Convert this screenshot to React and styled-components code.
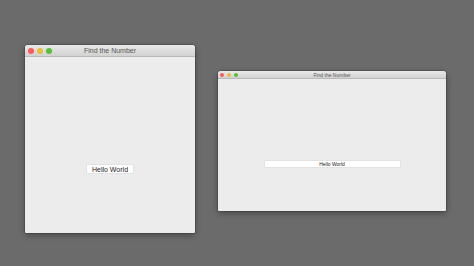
import React from 'react'
import styled, { createGlobalStyle } from 'styled-components'

const Global = createGlobalStyle`
  html, body { margin: 0; padding: 0; }
  body {
    width: 474px;
    height: 266px;
    overflow: hidden;
    font-family: "Liberation Sans", Arial, sans-serif;
  }
`

const Desktop = styled.div`
  position: relative;
  width: 474px;
  height: 266px;
  background: #6b6b6b;
`

const Window = styled.div`
  position: absolute;
  left: ${p => p.x}px;
  top: ${p => p.y}px;
  width: ${p => p.w}px;
  height: ${p => p.h}px;
  display: flex;
  flex-direction: column;
  background: #ececec;
  border-radius: 3px 3px 1px 1px;
  overflow: hidden;
  box-shadow: 0 2px 6px rgba(0, 0, 0, 0.35), 0 0 0 0.5px rgba(0, 0, 0, 0.3);
`

const TitleBar = styled.div`
  position: relative;
  height: ${p => p.h}px;
  flex: none;
  display: flex;
  align-items: center;
  justify-content: center;
  background: linear-gradient(#e9e9e9, #d2d2d2);
  border-bottom: 1px solid #b9b9b9;
  color: #555;
  font-size: ${p => p.fs}px;
`

const Lights = styled.div`
  position: absolute;
  left: ${p => p.left}px;
  top: 0;
  bottom: 0;
  display: flex;
  align-items: center;
  gap: ${p => p.gap}px;
`

const Light = styled.span`
  width: ${p => p.size}px;
  height: ${p => p.size}px;
  border-radius: 50%;
  background: ${p => p.color};
`

const Body = styled.div`
  flex: 1;
  display: flex;
  align-items: center;
  justify-content: center;
`

const Label = styled.div`
  width: ${p => p.w}px;
  height: ${p => p.h}px;
  margin-top: ${p => p.mt}px;
  background: #ffffff;
  display: flex;
  align-items: center;
  justify-content: center;
  font-size: ${p => p.fs}px;
  color: #222;
  box-shadow: 0 0 0 0.5px rgba(0, 0, 0, 0.08);
`

function TrafficLights({ left, size, gap }) {
  return (
    <Lights left={left} gap={gap}>
      <Light size={size} color="#fc5b57" />
      <Light size={size} color="#e5bf3c" />
      <Light size={size} color="#57c038" />
    </Lights>
  )
}

export default function App() {
  return (
    <Desktop>
      <Global />
      <Window x={25} y={45} w={170} h={188}>
        <TitleBar h={11} fs={7}>
          <TrafficLights left={3} size={6} gap={3} />
          Find the Number
        </TitleBar>
        <Body>
          <Label w={46} h={8} mt={48} fs={7}>Hello World</Label>
        </Body>
      </Window>
      <Window x={218} y={71} w={228} h={140}>
        <TitleBar h={7} fs={5}>
          <TrafficLights left={2} size={4} gap={3} />
          Find the Number
        </TitleBar>
        <Body>
          <Label w={135} h={6} mt={38} fs={5}>Hello World</Label>
        </Body>
      </Window>
    </Desktop>
  )
}
